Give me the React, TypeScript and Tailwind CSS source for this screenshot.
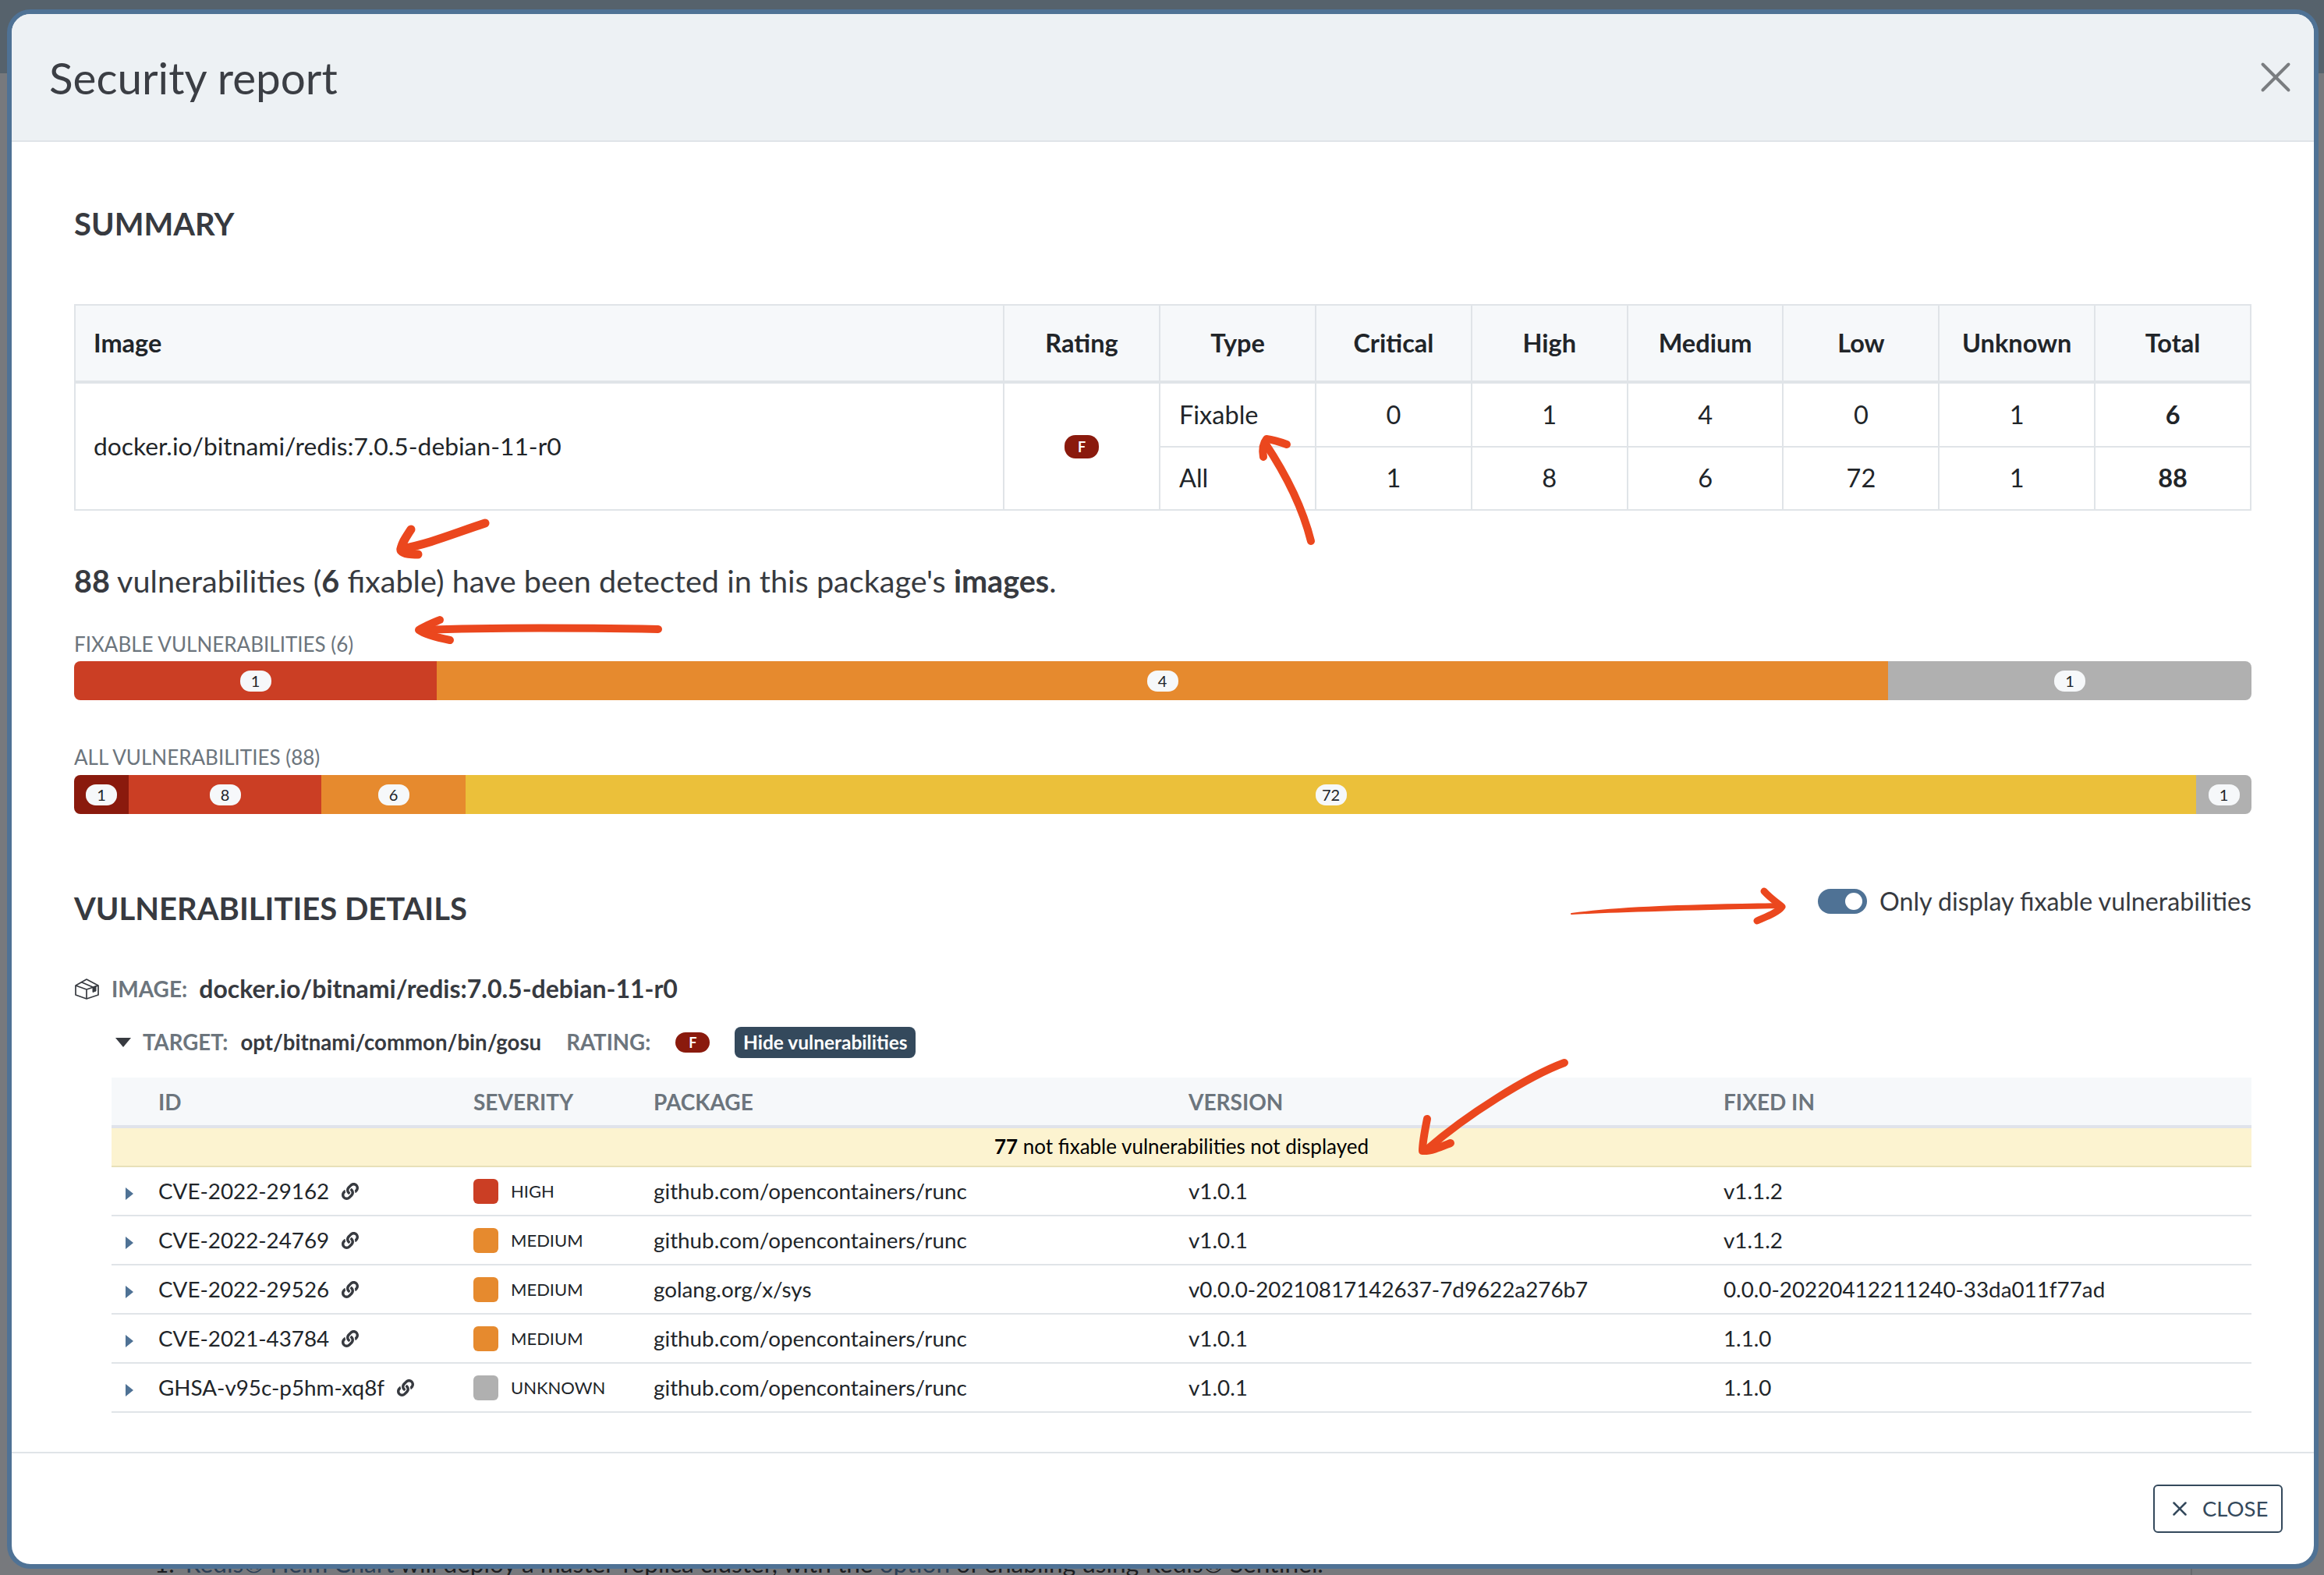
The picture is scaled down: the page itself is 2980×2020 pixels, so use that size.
import React from "react";
import { FaLink } from "react-icons/fa";
import { X } from "lucide-react";

const Pill = ({ n }: { n: string | number }) => (
  <span className="flex h-[27px] w-[40px] items-center justify-center rounded-[13px] bg-[#f6f8fa] text-[20px] leading-none text-[#212529]">{n}</span>
);

const Seg = ({ className, n }: { className: string; n: number }) => (
  <div className={`flex h-full items-center justify-center ${className}`}><Pill n={n} /></div>
);

const F = ({ className }: { className: string }) => (
  <span className={`flex items-center justify-center rounded-[14px] bg-[#8a1a0d] font-bold text-white text-[18px] leading-none ${className}`}>F</span>
);

const summaryHeads = ["Critical", "High", "Medium", "Low", "Unknown", "Total"];
const fixable = ["0", "1", "4", "0", "1", "6"];
const all = ["1", "8", "6", "72", "1", "88"];

const vulns = [
  { id: "CVE-2022-29162", sev: "HIGH", col: "bg-[#cb3e24]", pkg: "github.com/opencontainers/runc", ver: "v1.0.1", fix: "v1.1.2" },
  { id: "CVE-2022-24769", sev: "MEDIUM", col: "bg-[#e68a2e]", pkg: "github.com/opencontainers/runc", ver: "v1.0.1", fix: "v1.1.2" },
  { id: "CVE-2022-29526", sev: "MEDIUM", col: "bg-[#e68a2e]", pkg: "golang.org/x/sys", ver: "v0.0.0-20210817142637-7d9622a276b7", fix: "0.0.0-20220412211240-33da011f77ad" },
  { id: "CVE-2021-43784", sev: "MEDIUM", col: "bg-[#e68a2e]", pkg: "github.com/opencontainers/runc", ver: "v1.0.1", fix: "1.1.0" },
  { id: "GHSA-v95c-p5hm-xq8f", sev: "UNKNOWN", col: "bg-[#b0b0b0]", pkg: "github.com/opencontainers/runc", ver: "v1.0.1", fix: "1.1.0" },
];

const Arrow = () => (
  <svg className="pointer-events-none absolute left-0 top-0" width="2980" height="2020" viewBox="0 0 2980 2020" fill="none" stroke="#eb471e" strokeLinecap="round" strokeLinejoin="round">
    <path d="M622 671 C585 683 550 698 514 704" strokeWidth="11" />
    <path d="M527 679 C520 690 514 698 514 706 C518 711 528 711 536 711" strokeWidth="11" />
    <path d="M844 807 C740 805 640 804 540 808" strokeWidth="10" />
    <path d="M564 795 C552 800 542 804 537 808 C545 814 562 818 577 821" strokeWidth="10" />
    <path d="M1681 694 C1670 650 1650 610 1622 568" strokeWidth="10" />
    <path d="M1620 586 C1618 575 1620 568 1624 563 C1633 564 1642 567 1650 570" strokeWidth="10" />
    <path d="M2015 1172 C2090 1162 2190 1161 2284 1159 L2284 1164 C2190 1166 2090 1168 2015 1172 Z" fill="#eb471e" strokeWidth="2" />
    <path d="M2262 1143 C2270 1152 2282 1160 2285 1163 C2280 1170 2264 1176 2253 1181" strokeWidth="9" />
    <path d="M2006 1363 C1960 1380 1880 1430 1830 1474" strokeWidth="10" />
    <path d="M1830 1435 C1827 1450 1824 1465 1824 1476 C1835 1477 1850 1470 1860 1466" strokeWidth="10" />
  </svg>
);

export default function App() {
  return (
    <div className="relative h-[2020px] w-[2980px] overflow-hidden bg-[#77797d] font-['Lato',sans-serif] text-[#373a40]">
      <div className="h-[94px] bg-[#56626c]" />
      <div className="absolute left-[198px] top-[1985px] whitespace-nowrap text-[31.6px] leading-[40px] text-[#1c1e22]">
        1.<span className="ml-[14px] text-[#2b3f55]">Redis® Helm Chart</span> will deploy a master-replica cluster, with the <span className="text-[#2b3f55]">option</span> of enabling using Redis® Sentinel.
      </div>
      <div className="absolute left-[2809px] top-[2012px] h-[8px] w-[2px] bg-[#67696d]" />

      <div className="absolute left-[9px] top-[12px] flex h-[2000px] w-[2964px] flex-col overflow-hidden rounded-[30px] border-[6px] border-[#4f7295] bg-white">
        <header className="flex h-[164px] shrink-0 items-center justify-between border-b-2 border-[#e0e4e8] bg-[#edf1f4] pl-[48px] pr-[16px]">
          <h1 className="text-[56.6px] font-normal leading-none text-[#3b3e44]">Security report</h1>
          <X size={66} strokeWidth={1.45} className="text-[#7a7d80]" />
        </header>

        <main className="flex-1 px-[80px]">
          <h2 className="mt-[80px] text-[40px] font-bold leading-[50px]">SUMMARY</h2>

          <div className="mt-[78px] flex h-[265px] border-[2px] border-[#e0e4e8] text-[32.5px] text-[#212529]">
            <div className="flex w-[1189px] flex-col">
              <div className="flex h-[100px] items-center border-b-[4px] border-[#e0e4e8] bg-[#f6f8fa] pl-[23px] font-bold">Image</div>
              <div className="flex flex-1 items-center pl-[23px] text-[31.8px]">docker.io/bitnami/redis:7.0.5-debian-11-r0</div>
            </div>
            <div className="flex w-[200px] flex-col border-l-2 border-[#e0e4e8]">
              <div className="flex h-[100px] items-center justify-center border-b-[4px] border-[#e0e4e8] bg-[#f6f8fa] font-bold">Rating</div>
              <div className="flex flex-1 items-center justify-center"><F className="h-[30px] w-[44px]" /></div>
            </div>
            <div className="flex w-[200px] flex-col border-l-2 border-[#e0e4e8]">
              <div className="flex h-[100px] items-center justify-center border-b-[4px] border-[#e0e4e8] bg-[#f6f8fa] font-bold">Type</div>
              <div className="flex h-[82px] items-center border-b-2 border-[#e0e4e8] pl-[24px]">Fixable</div>
              <div className="flex flex-1 items-center pl-[24px]">All</div>
            </div>
            {summaryHeads.map((h, i) => (
              <div key={h} className="flex flex-1 flex-col border-l-2 border-[#e0e4e8]">
                <div className="flex h-[100px] items-center justify-center border-b-[4px] border-[#e0e4e8] bg-[#f6f8fa] font-bold">{h}</div>
                <div className={`flex h-[82px] items-center justify-center border-b-2 border-[#e0e4e8] ${i === 5 ? "font-bold" : ""}`}>{fixable[i]}</div>
                <div className={`flex flex-1 items-center justify-center ${i === 5 ? "font-bold" : ""}`}>{all[i]}</div>
              </div>
            ))}
          </div>

          <p className="mt-[65px] text-[39.6px] leading-[50px]"><b>88</b> vulnerabilities (<b>6</b> fixable) have been detected in this package's <b>images</b>.</p>

          <div className="mt-[38px] text-[26px] leading-[36px] text-[#6c757d]">FIXABLE VULNERABILITIES (6)</div>
          <div className="mt-[4px] flex h-[50px] overflow-hidden rounded-[8px]">
            <Seg className="w-[465px] bg-[#cb3e24]" n={1} />
            <Seg className="w-[1861px] bg-[#e68a2e]" n={4} />
            <Seg className="flex-1 bg-[#b0b0b0]" n={1} />
          </div>

          <div className="mt-[55px] text-[26px] leading-[36px] text-[#6c757d]">ALL VULNERABILITIES (88)</div>
          <div className="mt-[5px] flex h-[50px] overflow-hidden rounded-[8px]">
            <Seg className="w-[70px] bg-[#8a1a0d]" n={1} />
            <Seg className="w-[247px] bg-[#cb3e24]" n={8} />
            <Seg className="w-[185px] bg-[#e68a2e]" n={6} />
            <Seg className="w-[2219px] bg-[#ebc03a]" n={72} />
            <Seg className="flex-1 bg-[#b0b0b0]" n={1} />
          </div>

          <div className="mt-[96px] flex items-center justify-between">
            <h2 className="text-[40px] font-bold leading-[50px]">VULNERABILITIES DETAILS</h2>
            <div className="-mt-[18px] flex items-center">
              <span className="flex h-[32px] w-[63px] items-center justify-end rounded-full bg-[#4f7295] pr-[6px]">
                <span className="h-[22px] w-[22px] rounded-full bg-white" />
              </span>
              <span className="ml-[16px] text-[32.2px] leading-[40px]">Only display fixable vulnerabilities</span>
            </div>
          </div>

          <div className="mt-[58px] flex h-[40px] items-center text-[32px]">
            <svg className="ml-[1px]" width="31" height="27" viewBox="0 0 31 27" fill="none" stroke="#373a40" strokeWidth="1.7" strokeLinejoin="round">
              <path d="M1 9 L15 1 L30 9 L30 21 L15 26 L1 21 Z" />
              <path d="M1 9 L15 14 L30 9 M15 14 L15 26 M8 4.5 L23 11" />
              <path d="M23 11 L27 9.5 L27 16 L23 17.5 Z" fill="#373a40" strokeWidth="1" />
            </svg>
            <span className="ml-[16px] text-[28px] font-bold text-[#6c757d]">IMAGE:</span>
            <span className="ml-[15px] font-bold">docker.io/bitnami/redis:7.0.5-debian-11-r0</span>
          </div>

          <div className="ml-[53px] mt-[29px] flex h-[40px] items-center text-[27.6px]">
            <span className="h-0 w-0 border-x-[10px] border-t-[12px] border-x-transparent border-t-[#373a40]" />
            <span className="ml-[15px] font-bold text-[#6c757d]">TARGET:</span>
            <span className="ml-[16px] font-bold">opt/bitnami/common/bin/gosu</span>
            <span className="ml-[32px] font-bold text-[#6c757d]">RATING:</span>
            <F className="ml-[32px] h-[26px] w-[44px]" />
            <span className="ml-[32px] flex h-[40px] w-[232px] items-center justify-center rounded-[8px] bg-[#34495c] text-[24.5px] font-bold text-white">Hide vulnerabilities</span>
          </div>

          <div className="ml-[48px] mt-[25px] text-[27.8px]">
            <div className="grid h-[65px] grid-cols-[404px_231px_686px_686px_1fr] items-center border-b-[4px] border-[#e0e3ea] bg-[#f6f8fa] pl-[60px] text-[28px] font-bold text-[#6c757d]">
              <span>ID</span><span>SEVERITY</span><span>PACKAGE</span><span>VERSION</span><span>FIXED IN</span>
            </div>
            <div className="flex h-[50px] items-center justify-center border-b-2 border-[#e8e0b8] bg-[#fcf3d0] pb-[2px] text-[26px] text-black"><b>77</b>&nbsp;not fixable vulnerabilities not displayed</div>
            {vulns.map((v) => (
              <div key={v.id} className="relative grid h-[63px] grid-cols-[404px_231px_686px_686px_1fr] items-center border-b-2 border-[#e0e4e8] pl-[60px] text-[#212529]">
                <span className="absolute left-[18px] top-[26px] h-0 w-0 border-y-[8px] border-l-[10px] border-y-transparent border-l-[#4f7295]" />
                <span className="flex items-center">{v.id}<FaLink className="ml-[16px] text-[22px] text-[#373a40]" /></span>
                <span className="flex items-center">
                  <span className={`h-[32px] w-[32px] rounded-[6px] ${v.col}`} />
                  <span className="ml-[16px] text-[22px]">{v.sev}</span>
                </span>
                <span>{v.pkg}</span>
                <span>{v.ver}</span>
                <span>{v.fix}</span>
              </div>
            ))}
          </div>
        </main>

        <footer className="flex h-[144px] shrink-0 items-center justify-end border-t-2 border-[#e0e4e8] pr-[40px]">
          <span className="flex h-[62px] w-[166px] items-center rounded-[6px] border-2 border-[#34495c] pl-[17px] text-[27.5px] text-[#34495c]">
            <X size={30} strokeWidth={2} className="mr-[14px]" />CLOSE
          </span>
        </footer>
      </div>
      <Arrow />
    </div>
  );
}
